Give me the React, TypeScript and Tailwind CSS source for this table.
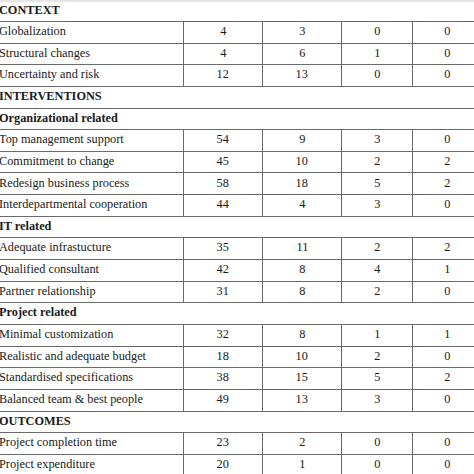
import React from "react";

type Row = { label: string; bold?: boolean; vals?: number[] };

const rows: Row[] = [
  { label: "CONTEXT", bold: true },
  { label: "Globalization", vals: [4, 3, 0, 0] },
  { label: "Structural changes", vals: [4, 6, 1, 0] },
  { label: "Uncertainty and risk", vals: [12, 13, 0, 0] },
  { label: "INTERVENTIONS", bold: true },
  { label: "Organizational related", bold: true },
  { label: "Top management support", vals: [54, 9, 3, 0] },
  { label: "Commitment to change", vals: [45, 10, 2, 2] },
  { label: "Redesign business process", vals: [58, 18, 5, 2] },
  { label: "Interdepartmental cooperation", vals: [44, 4, 3, 0] },
  { label: "IT related", bold: true },
  { label: "Adequate infrastucture", vals: [35, 11, 2, 2] },
  { label: "Qualified consultant", vals: [42, 8, 4, 1] },
  { label: "Partner relationship", vals: [31, 8, 2, 0] },
  { label: "Project related", bold: true },
  { label: "Minimal customization", vals: [32, 8, 1, 1] },
  { label: "Realistic and adequate budget", vals: [18, 10, 2, 0] },
  { label: "Standardised specifications", vals: [38, 15, 5, 2] },
  { label: "Balanced team & best people", vals: [49, 13, 3, 0] },
  { label: "OUTCOMES", bold: true },
  { label: "Project completion time", vals: [23, 2, 0, 0] },
  { label: "Project expenditure", vals: [20, 1, 0, 0] },
];

export default function App() {
  return (
    <div
      className="w-[474px] h-[474px] overflow-hidden bg-white text-[#1a1a1a]"
      style={{ fontFamily: '"Liberation Serif", "Times New Roman", serif' }}
    >
      <div className="h-[2px] bg-[#e6e6e6]" />
      <div className="w-[482px]">
        {rows.map((r, i) => (
          <div
            key={i}
            className={`grid grid-cols-[183px_79px_79px_71px_70px] border-b border-[#6a6a6a] text-[13.5px] leading-none ${
              i === 0 ? "h-[20px]" : "h-[21.65px]"
            }`}
          >
            {r.vals ? (
              <>
                <div className="flex items-center pb-[3px] -ml-px whitespace-nowrap">
                  <span className="inline-block origin-left scale-x-[0.91]">{r.label}</span>
                </div>
                {r.vals.map((v, j) => (
                  <div
                    key={j}
                    className="flex items-center justify-center pb-[3px] border-l border-[#6a6a6a]"
                  >
                    <span className="inline-block scale-x-[0.91]">{v}</span>
                  </div>
                ))}
              </>
            ) : (
              <div className="col-span-5 flex items-center pb-[3px] -ml-px font-bold whitespace-nowrap">
                <span className="inline-block origin-left scale-x-[0.91]">{r.label}</span>
              </div>
            )}
          </div>
        ))}
      </div>
    </div>
  );
}
